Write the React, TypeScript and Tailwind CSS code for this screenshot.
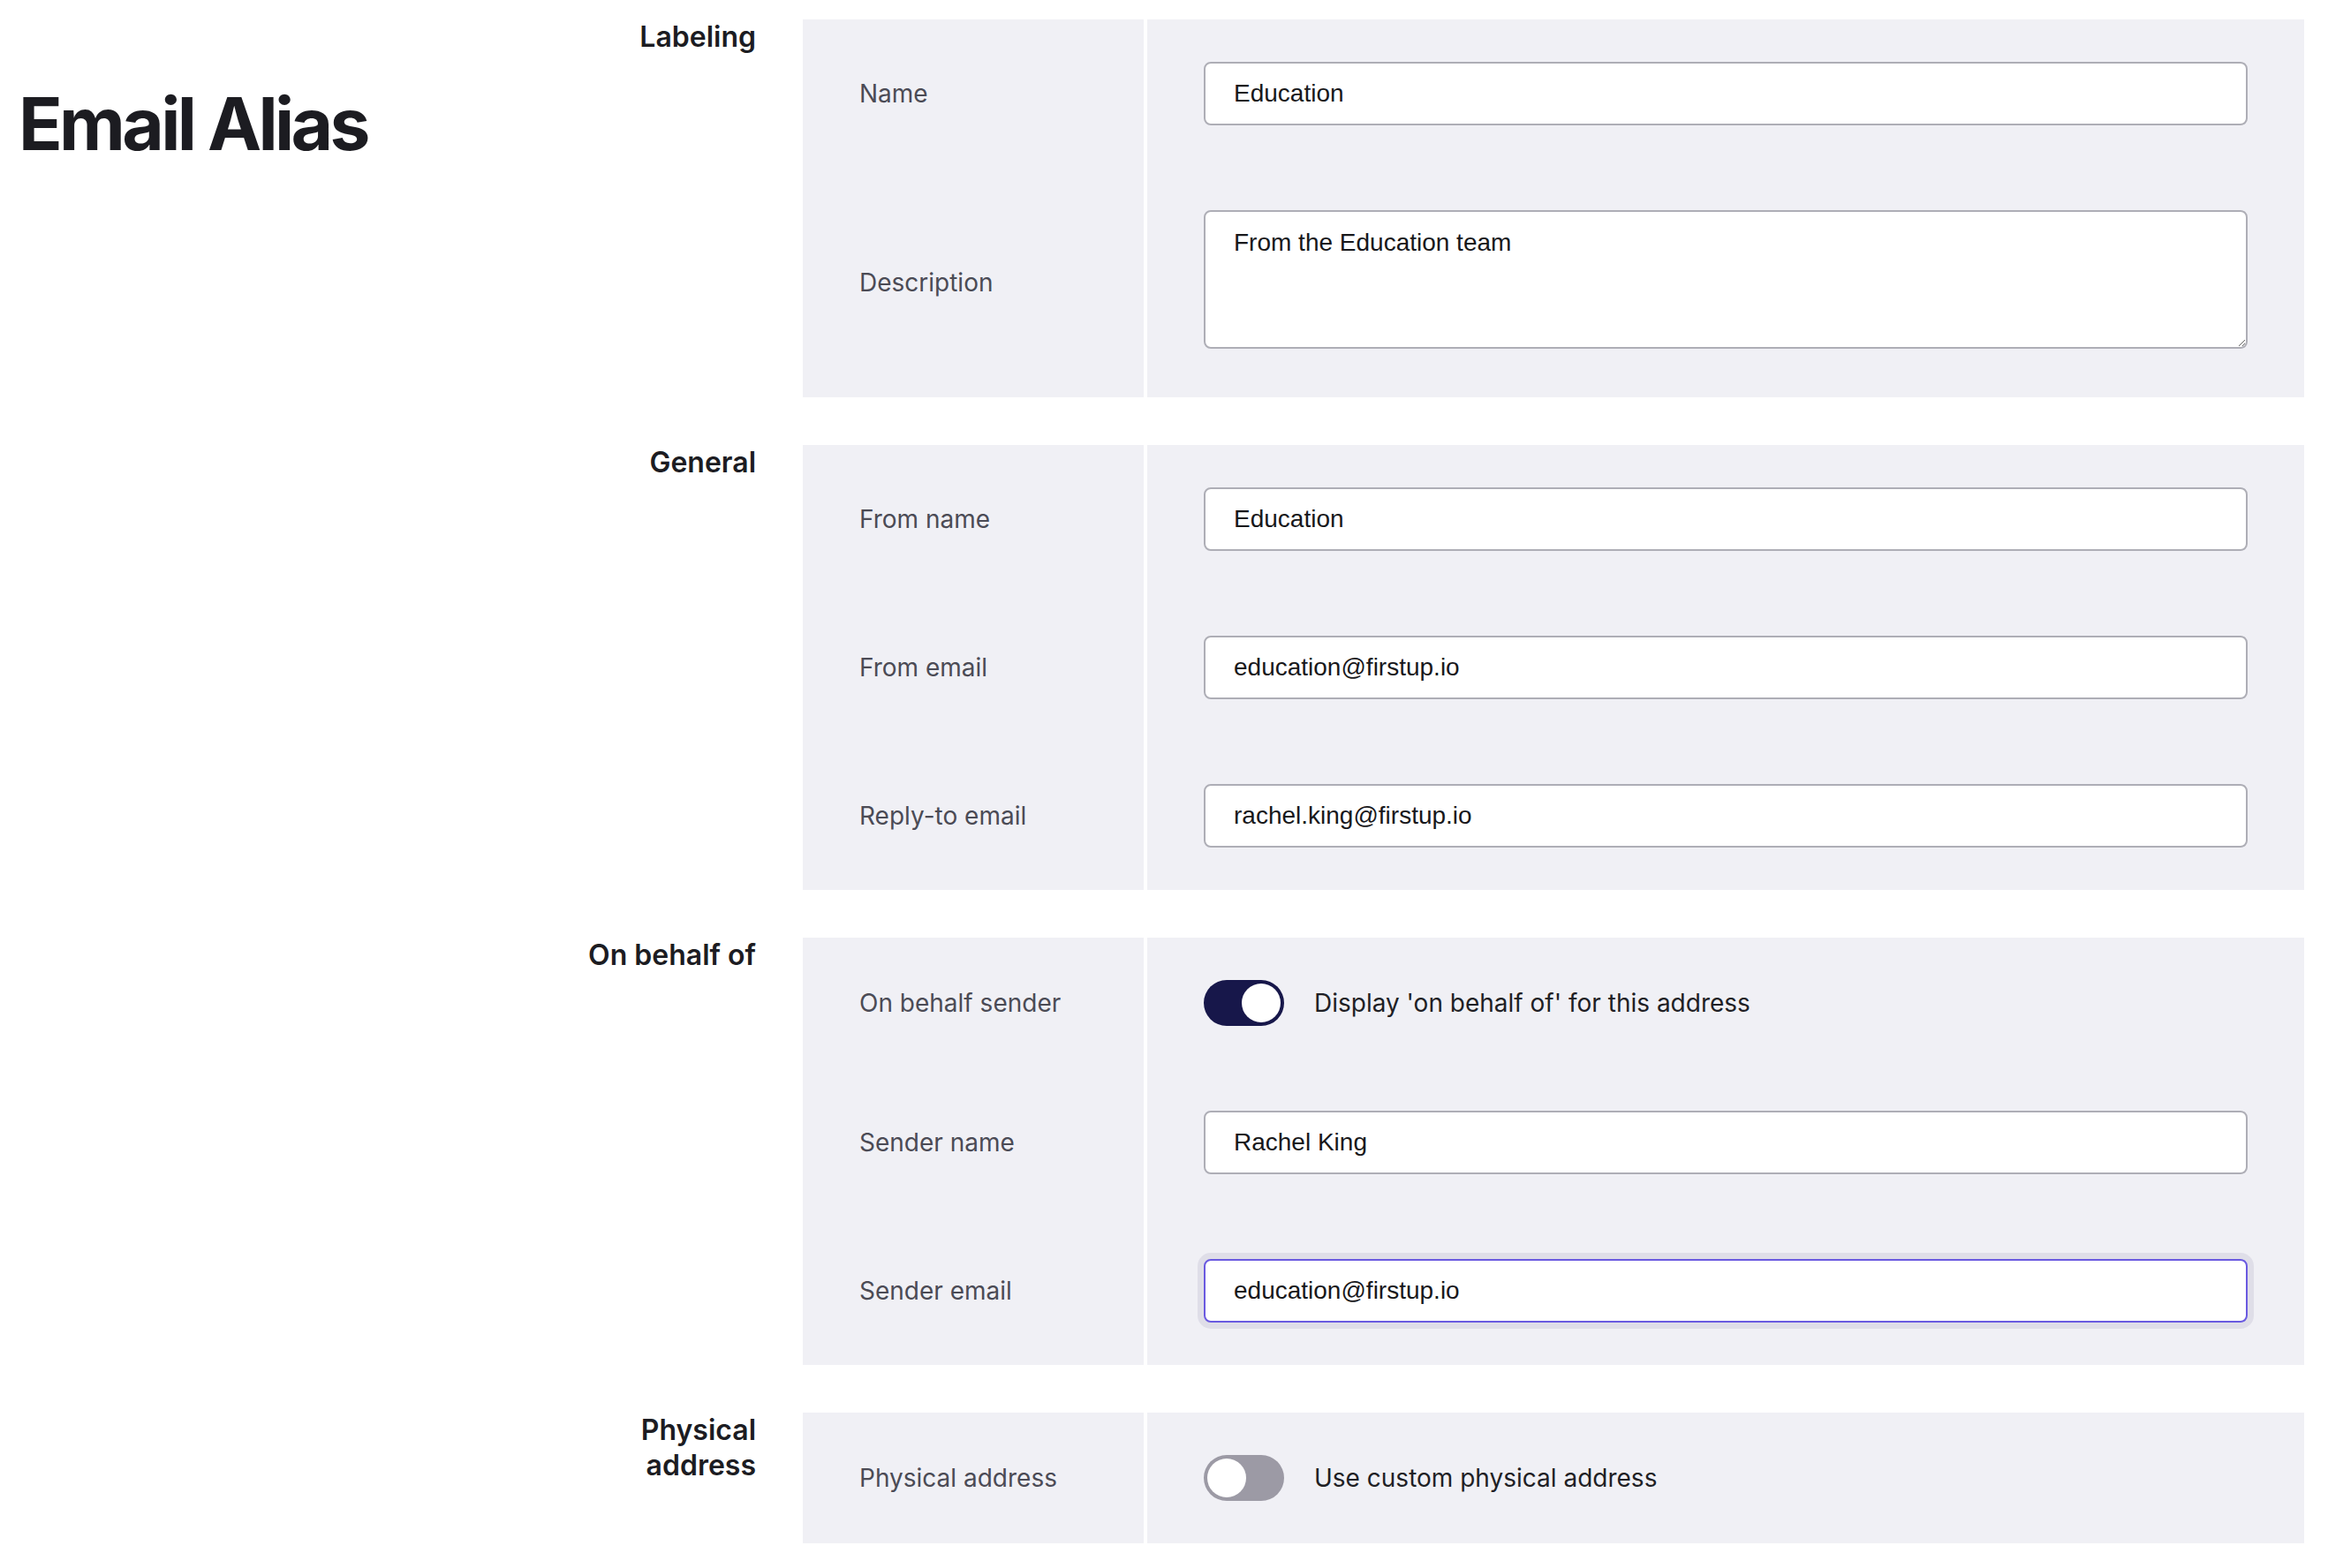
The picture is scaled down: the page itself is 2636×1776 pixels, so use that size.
import React from 'react';

const inputCls =
  "w-full h-[72px] rounded-[8px] border-2 border-[#aeaeb6] bg-white px-[32px] font-['Liberation_Sans',Arial,sans-serif] text-[28px] text-[#18181b] outline-none";

const Label: React.FC<{ text: string }> = ({ text }) => (
  <div className="flex items-center bg-[#f0f0f5] pl-[64px] text-[28px] text-[#4b4b55]">{text}</div>
);

const Field: React.FC<{ children: React.ReactNode }> = ({ children }) => (
  <div className="flex items-center bg-[#f0f0f5] px-[64px] py-[48px]">{children}</div>
);

const Toggle: React.FC<{ on: boolean; text: string }> = ({ on, text }) => (
  <div className="flex items-center gap-[34px]">
    <span
      className={
        on
          ? 'flex h-[52px] w-[91px] items-center justify-end rounded-full bg-[#17174a] px-[4px]'
          : 'flex h-[52px] w-[91px] items-center justify-start rounded-full bg-[#9c9aa5] px-[4px]'
      }
    >
      <span className="h-[44px] w-[44px] rounded-full bg-white" />
    </span>
    <span className="text-[28px] text-[#1f1f25]">{text}</span>
  </div>
);

const Section: React.FC<{ title: React.ReactNode; children: React.ReactNode }> = ({ title, children }) => (
  <div className="flex gap-[53px]">
    <h2 className="w-[220px] shrink-0 text-right text-[32px] font-semibold leading-[40px] text-[#1c1c22]">{title}</h2>
    <div className="grid flex-1 grid-cols-[386px_1fr] gap-x-[4px]">{children}</div>
  </div>
);

export default function App() {
  return (
    <div className="flex min-h-screen bg-white font-['Inter',sans-serif]">
      <div className="w-[636px] shrink-0 pl-[21px] pt-[100px]">
        <h1 className="text-[82px] font-bold leading-none tracking-[-0.045em] text-[#1c1c21]">Email Alias</h1>
      </div>
      <div className="flex flex-1 flex-col gap-[54px] pr-[27px] pt-[22px]">
        <Section title="Labeling">
          <Label text="Name" />
          <Field>
            <input className={inputCls} defaultValue="Education" />
          </Field>
          <Label text="Description" />
          <Field>
            <textarea
              className="mb-[7px] h-[157px] w-full rounded-[8px] border-2 border-[#aeaeb6] bg-white px-[32px] py-[14px] font-['Liberation_Sans',Arial,sans-serif] text-[28px] text-[#18181b] outline-none"
              defaultValue="From the Education team"
            />
          </Field>
        </Section>

        <Section title="General">
          <Label text="From name" />
          <Field>
            <input className={inputCls} defaultValue="Education" />
          </Field>
          <Label text="From email" />
          <Field>
            <input className={inputCls} defaultValue="education@firstup.io" />
          </Field>
          <Label text="Reply-to email" />
          <Field>
            <input className={inputCls} defaultValue="rachel.king@firstup.io" />
          </Field>
        </Section>

        <Section title="On behalf of">
          <Label text="On behalf sender" />
          <Field>
            <Toggle on text="Display 'on behalf of' for this address" />
          </Field>
          <Label text="Sender name" />
          <Field>
            <input className={inputCls} defaultValue="Rachel King" />
          </Field>
          <Label text="Sender email" />
          <Field>
            <input
              className="h-[72px] w-full rounded-[8px] border-2 border-[#6a5ae0] bg-white px-[32px] font-['Liberation_Sans',Arial,sans-serif] text-[28px] text-[#18181b] shadow-[0_0_0_7px_#dfdee8] outline-none"
              defaultValue="education@firstup.io"
            />
          </Field>
        </Section>

        <Section
          title={
            <>
              Physical
              <br />
              address
            </>
          }
        >
          <Label text="Physical address" />
          <Field>
            <Toggle on={false} text="Use custom physical address" />
          </Field>
        </Section>
      </div>
    </div>
  );
}
